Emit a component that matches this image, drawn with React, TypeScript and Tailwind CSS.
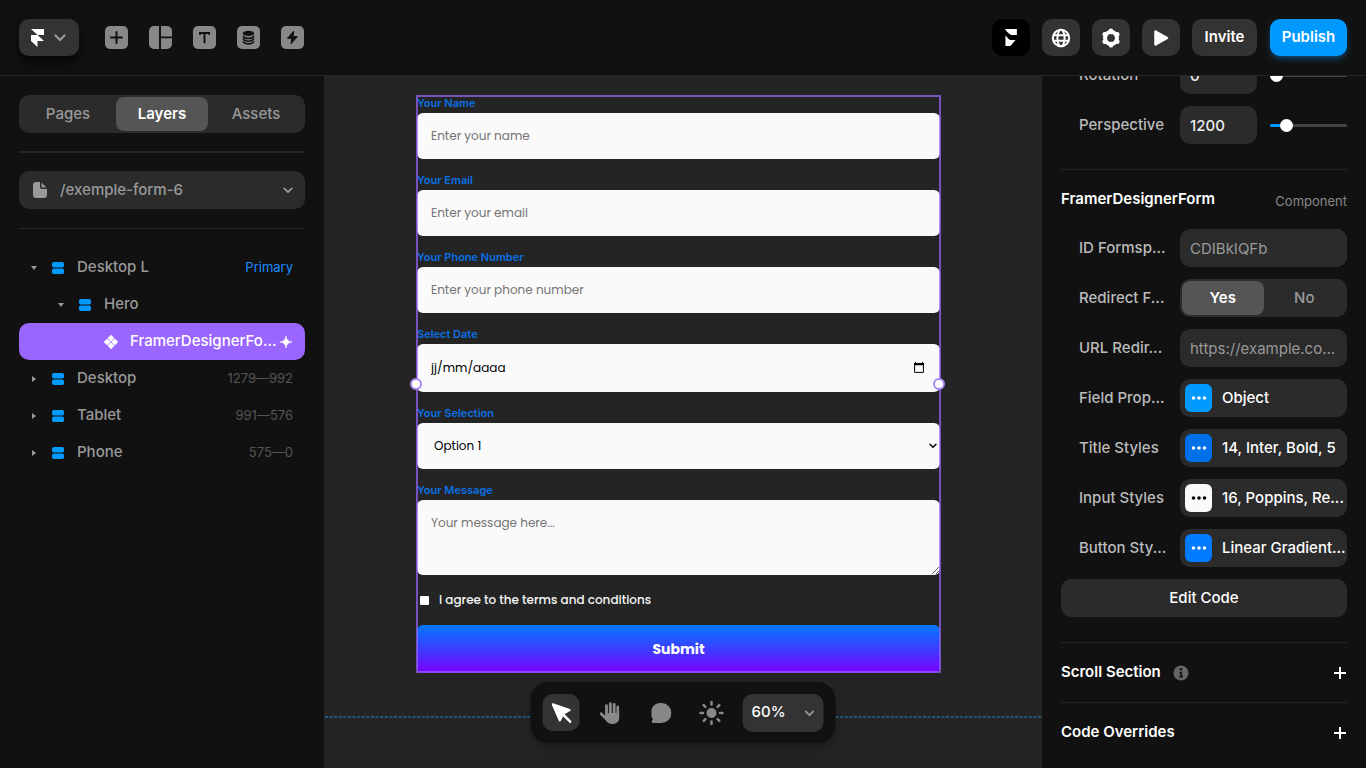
import { clsx } from "clsx";
import { useState, type ReactNode } from "react";

const Chevron = ({ className }: { className?: string }) => (
  <svg
    viewBox="0 0 12 8"
    className={className}
    fill="none"
    stroke="currentColor"
    strokeWidth="2.2"
    strokeLinecap="round"
    strokeLinejoin="round"
    aria-hidden="true"
  >
    <path d="M1.5 1.5 6 6l4.5-4.5" />
  </svg>
);

const FramerLogo = () => (
  <svg viewBox="0 0 16 24" className="h-[18px] w-[13px]" fill="#fff" preserveAspectRatio="none" aria-hidden="true">
    <path d="M0 0h16v8H8zM0 8h8l8 8H0zM0 16h8v8z" />
  </svg>
);

const SiteLogo = () => (
  <svg viewBox="0 0 36 52" className="h-[17px] w-3" fill="#fff" aria-hidden="true">
    <path d="M0 0h36v18H19C12 15 4 8 0 0zM1 19c4 6 8 10 14 15h17L16 52H1z" />
  </svg>
);

const GlobeIcon = () => (
  <svg viewBox="0 0 20 20" className="size-5" fill="none" stroke="#fff" strokeWidth="2" aria-hidden="true">
    <circle cx="10" cy="10" r="8.2" />
    <ellipse cx="10" cy="10" rx="3.6" ry="8.2" />
    <path d="M2.3 7.2h15.4M2.3 12.8h15.4" />
  </svg>
);

const GearIcon = () => (
  <svg viewBox="0 0 20 20" className="size-5" aria-hidden="true">
    <circle cx="10" cy="10" r="6" fill="none" stroke="#fff" strokeWidth="4" />
    <path
      d="M10 2.6v2M10 15.4v2M3.6 6.3l1.7 1M14.7 12.7l1.7 1M3.6 13.7l1.7-1M14.7 7.3l1.7-1"
      stroke="#fff"
      strokeWidth="4.4"
      strokeLinecap="round"
    />
    <circle cx="10" cy="10" r="3.8" fill="#333" />
  </svg>
);

const PlayIcon = () => (
  <svg viewBox="0 0 16 18" className="h-[18px] w-4" aria-hidden="true">
    <path d="M2.5 2.5v13L14 9z" fill="#fff" stroke="#fff" strokeWidth="2.5" strokeLinejoin="round" />
  </svg>
);

const Tile = ({ children }: { children: ReactNode }) => (
  <svg viewBox="0 0 23 23" className="size-[23px]" aria-hidden="true">
    <rect width="23" height="23" rx="5" fill="#888" />
    {children}
  </svg>
);

const TOOLS = [
  {
    name: "Insert",
    icon: (
      <Tile>
        <path d="M11.5 6v11M6 11.5h11" stroke="#111" strokeWidth="2" strokeLinecap="round" />
      </Tile>
    ),
  },
  {
    name: "Layout",
    icon: (
      <svg viewBox="0 0 23 23" className="size-[23px]" fill="#888" aria-hidden="true">
        <path d="M5 0h5v23H5a5 5 0 0 1-5-5V5a5 5 0 0 1 5-5zM12 0h6a5 5 0 0 1 5 5v5.6H12zM12 12.2h11V18a5 5 0 0 1-5 5h-6z" />
      </svg>
    ),
  },
  {
    name: "Text",
    icon: (
      <Tile>
        <path d="M7 8V7h9v1M11.5 7v9.5" fill="none" stroke="#111" strokeWidth="2" strokeLinecap="round" />
      </Tile>
    ),
  },
  {
    name: "CMS",
    icon: (
      <Tile>
        <ellipse cx="11.5" cy="7.4" rx="5.7" ry="2.6" fill="#111" />
        <path
          d="M6.4 10.5c1.5 2.6 8.7 2.6 10.2 0M6.4 13.2c1.5 2.7 8.7 2.7 10.2 0M6.4 15.9c1.5 2.7 8.7 2.7 10.2 0"
          fill="none"
          stroke="#111"
          strokeWidth="1.7"
          strokeLinecap="round"
        />
      </Tile>
    ),
  },
  {
    name: "Actions",
    icon: (
      <Tile>
        <path
          d="M12.7 5.2 6.5 12.3h4.3l-.8 5.5 6.4-7.2h-4.3z"
          fill="#111"
          stroke="#111"
          strokeWidth="1"
          strokeLinejoin="round"
        />
      </Tile>
    ),
  },
];

const StackIcon = () => (
  <svg viewBox="0 0 12 12" className="size-3 shrink-0" fill="#0099ff" aria-hidden="true">
    <rect width="12" height="5.6" rx="1.8" />
    <rect y="6.4" width="12" height="5.6" rx="1.8" />
  </svg>
);

const ComponentIcon = () => (
  <svg viewBox="0 0 14 14" className="size-3.5 shrink-0" fill="#fff" aria-hidden="true">
    <path
      d="M7 .6 9.600 3.200 7 5.800 4.400 3.200zM3.200 4.400 5.800 7 3.200 9.600.6 7zM10.800 4.400 13.400 7l-2.600 2.600L8.200 7zM7 8.200l2.600 2.600L7 13.400l-2.600-2.600z"
      stroke="#fff"
      strokeWidth="1.1"
      strokeLinejoin="round"
    />
  </svg>
);

const SparkleIcon = () => (
  <svg viewBox="0 0 12 12" className="size-3 shrink-0" fill="#fff" aria-hidden="true">
    <path
      d="M6 0c.5 3.8 2.2 5.5 6 6-3.8.5-5.5 2.2-6 6-.5-3.8-2.2-5.5-6-6 3.8-.5 5.5-2.2 6-6z"
      stroke="#fff"
      strokeWidth=".6"
    />
  </svg>
);

const Caret = ({ open }: { open?: boolean }) => (
  <svg viewBox="0 0 6 6" className="size-1.5 shrink-0" fill="#999" aria-hidden="true">
    {open ? <path d="M0 1h6L3 5z" /> : <path d="M1 0v6l4-3z" />}
  </svg>
);

const ICON_BUTTON = "flex h-[37px] w-[38px] items-center justify-center rounded-[10px]";

const TopBar = () => (
  <header className="flex h-[76px] shrink-0 items-center justify-between border-b border-[#242424] bg-[#111] px-[19px]">
    <div className="flex items-center">
      <button
        aria-label="Main menu"
        className="flex h-[37px] w-[60px] items-center justify-center gap-2.5 rounded-[10px] bg-[#333] pr-0.5 shadow-lg shadow-black/60"
      >
        <FramerLogo />
        <Chevron className="h-2 w-3 text-[#999]" />
      </button>
      <div className="ml-[26px] flex gap-[21px]">
        {TOOLS.map(({ name, icon }) => (
          <button key={name} aria-label={name}>
            {icon}
          </button>
        ))}
      </div>
    </div>

    <div className="flex gap-3 text-[15px] font-semibold text-white">
      <button aria-label="Site" className={clsx(ICON_BUTTON, "bg-black")}>
        <SiteLogo />
      </button>
      <button aria-label="Language" className={clsx(ICON_BUTTON, "bg-[#333]")}>
        <GlobeIcon />
      </button>
      <button aria-label="Settings" className={clsx(ICON_BUTTON, "bg-[#333]")}>
        <GearIcon />
      </button>
      <button aria-label="Preview" className={clsx(ICON_BUTTON, "bg-[#333]")}>
        <PlayIcon />
      </button>
      <button className="h-[37px] w-[65px] rounded-[10px] bg-[#333]">Invite</button>
      <button className="ml-px h-[37px] w-[77px] rounded-[10px] bg-[#0099ff] shadow-md shadow-[#0099ff]/30">Publish</button>
    </div>
  </header>
);

const TABS = ["Pages", "Layers", "Assets"];

type Layer = {
  name: string;
  info?: string;
  primary?: boolean;
  open?: boolean;
  nested?: boolean;
  selected?: boolean;
};

const LAYERS: Layer[] = [
  { name: "Desktop L", info: "Primary", primary: true, open: true },
  { name: "Hero", open: true, nested: true },
  { name: "FramerDesignerFo...", selected: true },
  { name: "Desktop", info: "1279—992" },
  { name: "Tablet", info: "991—576" },
  { name: "Phone", info: "575—0" },
];

const LayerRow = ({ layer }: { layer: Layer }) => {
  if (layer.selected)
    return (
      <li>
        <button className="flex h-[37px] w-full items-center rounded-[10px] bg-[#9966ff] pr-[13px] pl-[85px] text-[15px] font-medium text-white">
          <ComponentIcon />
          <span className="mr-auto ml-3">{layer.name}</span>
          <SparkleIcon />
        </button>
      </li>
    );

  return (
    <li>
      <button
        className={clsx(
          "flex h-[37px] w-full items-center pr-3 text-[15px] font-medium text-[#999]",
          layer.nested ? "pl-[39px]" : "pl-3",
        )}
      >
        <Caret open={layer.open} />
        <span className="ml-[15px]">
          <StackIcon />
        </span>
        <span className="ml-[13px]">{layer.name}</span>
        {layer.info && (
          <span className={clsx("ml-auto text-[13px] font-normal", layer.primary ? "text-[#1a8cff]" : "text-[#555]")}>
            {layer.info}
          </span>
        )}
      </button>
    </li>
  );
};

const LeftPanel = () => {
  const [tab, setTab] = useState("Layers");

  return (
    <aside className="w-[324px] shrink-0 bg-[#111] p-[19px]">
      <div role="tablist" className="grid h-[38px] grid-cols-3 rounded-[10px] bg-[#2b2b2b] p-0.5 text-[15px]">
        {TABS.map((name) => (
          <button
            key={name}
            role="tab"
            aria-selected={tab === name}
            onClick={() => setTab(name)}
            className={clsx(
              "rounded-lg",
              tab === name ? "mx-px bg-[#555] font-semibold text-white" : "font-medium text-[#999]",
            )}
          >
            {name}
          </button>
        ))}
      </div>

      <hr className="mt-[18px] border-t-2 border-[#242424]" />

      <div className="relative mt-[18px]">
        <svg viewBox="0 0 14 16" className="absolute top-[11px] left-[14px] h-4 w-3.5" fill="#999" aria-hidden="true">
          <path d="M3 0h4v5a2 2 0 0 0 2 2h5v6a3 3 0 0 1-3 3H3a3 3 0 0 1-3-3V3a3 3 0 0 1 3-3z" />
          <path d="M8.5.5 13.3 5.5H9.5a1 1 0 0 1-1-1z" />
        </svg>
        <select
          aria-label="Page"
          className="h-[38px] w-full appearance-none rounded-[10px] bg-[#2b2b2b] pl-[41px] text-[15px] font-medium text-[#999]"
        >
          <option>/exemple-form-6</option>
        </select>
        <Chevron className="pointer-events-none absolute top-4 right-3 h-[7px] w-2.5 text-[#999]" />
      </div>

      <hr className="mt-[19px] border-[#242424]" />

      <ul className="mt-5">
        {LAYERS.map((layer) => (
          <LayerRow key={layer.name} layer={layer} />
        ))}
      </ul>
    </aside>
  );
};

const FORM_FONT = "font-['Poppins','Noto_Sans',sans-serif]";
const FIELD = clsx(FORM_FONT, "block w-full rounded-md bg-[#fafafa] text-xs text-black placeholder:text-[#757575]");

const FormField = ({ id, label, children }: { id: string; label: string; children: ReactNode }) => (
  <div>
    <label htmlFor={id} className="mb-[3px] block text-[11px] leading-[14px] font-semibold text-[#0a70e4]">
      {label}
    </label>
    {children}
  </div>
);

const DesignerForm = () => (
  <form className="relative px-px pt-px" onSubmit={(e) => e.preventDefault()}>
    <div className="flex flex-col gap-3.5">
      <FormField id="name" label="Your Name">
        <input id="name" placeholder="Enter your name" className={clsx(FIELD, "h-[46px] px-3.5")} />
      </FormField>
      <FormField id="email" label="Your Email">
        <input id="email" type="email" placeholder="Enter your email" className={clsx(FIELD, "h-[46px] px-3.5")} />
      </FormField>
      <FormField id="phone" label="Your Phone Number">
        <input id="phone" type="tel" placeholder="Enter your phone number" className={clsx(FIELD, "h-[46px] px-3.5")} />
      </FormField>
      <FormField id="date" label="Select Date">
        <div className="relative">
          <input id="date" placeholder="jj/mm/aaaa" className={clsx(FIELD, "h-12 px-3.5 placeholder:text-black")} />
          <svg viewBox="0 0 10 11" className="absolute top-[18px] right-4 h-[11px] w-2.5" aria-hidden="true">
            <path d="M.6 2.5h8.8v7.9H.6z" fill="none" stroke="#000" strokeWidth="1" />
            <path d="M0 1h1V0h1v1h6V0h1v1h1v2.2H0z" />
          </svg>
        </div>
      </FormField>
      <FormField id="selection" label="Your Selection">
        <div className="relative">
          <select id="selection" className={clsx(FIELD, "h-[46px] appearance-none px-[17px]")}>
            <option>Option 1</option>
          </select>
          <Chevron className="pointer-events-none absolute top-5 right-[3px] h-1.5 w-2 text-black" />
        </div>
      </FormField>
      <FormField id="message" label="Your Message">
        <textarea id="message" placeholder="Your message here..." className={clsx(FIELD, "h-[75px] px-3.5 pt-[15px]")} />
      </FormField>
    </div>

    <label className={clsx("flex h-[50px] items-center gap-2.5 pl-[3px] text-xs font-medium text-[#f5f5f5]", FORM_FONT)}>
      <input type="checkbox" className="size-[9px] appearance-none rounded-[1px] bg-white checked:bg-[#0099ff]" />
      I agree to the terms and conditions
    </label>

    <button
      className={clsx(
        "block h-12 w-full rounded-md bg-linear-to-b/srgb from-[#007aff] to-[#7a00ff] text-sm font-bold text-white",
        FORM_FONT,
      )}
    >
      Submit
    </button>

    {/* selection outline and its two side handles */}
    <div className="pointer-events-none absolute inset-0 border-2 border-[#9966ff]/70">
      <span className="absolute top-1/2 -left-2 size-3 -translate-y-1/2 rounded-full border-2 border-[#a988f5] bg-white" />
      <span className="absolute top-1/2 -right-1.5 size-3 -translate-y-1/2 rounded-full border-2 border-[#a988f5] bg-white" />
    </div>
  </form>
);

const CanvasToolbar = () => (
  <div className="absolute bottom-[25px] left-1/2 flex h-[61px] -translate-x-1/2 items-center gap-[13px] rounded-[18px] bg-[#111] px-3 shadow-lg shadow-black/20">
    <button aria-label="Select" className="flex size-[37px] items-center justify-center rounded-[10px] bg-[#333]">
      <svg viewBox="0 0 60 60" className="size-5" fill="#fff" stroke="#fff" strokeLinejoin="round" aria-hidden="true">
        <path d="M4 4 54 21 35 32 25 52z" strokeWidth="7" />
        <path d="M35 35 56 56" strokeWidth="8" strokeLinecap="round" />
      </svg>
    </button>
    <button aria-label="Hand" className="flex size-[37px] items-center justify-center pr-1">
      <svg viewBox="0 0 60 66" className="h-[22px] w-5" aria-hidden="true">
        <path
          d="M21 11v30M32.5 5v36M44 7v34M55 15v30M5 35l18 18"
          stroke="#888"
          strokeWidth="8.5"
          strokeLinecap="round"
        />
        <path d="M17 33h42.2v14C59.2 58 51 66 39 66c-9 0-14-3-19-9z" fill="#888" />
      </svg>
    </button>
    <button aria-label="Comment" className="flex size-[37px] items-center justify-center">
      <svg viewBox="0 0 20 20" className="size-5" fill="#888" aria-hidden="true">
        <path d="M10 0a10 10 0 1 1 0 20H1.3a1.2 1.2 0 0 1-.8-2l1-1.7A10 10 0 0 1 10 0z" />
      </svg>
    </button>
    <button aria-label="Theme" className="flex size-[37px] items-center justify-center">
      <svg viewBox="0 0 26 26" className="size-[26px]" aria-hidden="true">
        <circle cx="13" cy="13" r="5" fill="#888" />
        <path
          d="M13 2v2.4M13 21.6V24M2 13h2.4M21.6 13H24M5.2 5.2l1.7 1.7M19.1 19.1l1.7 1.7M5.2 20.8l1.7-1.7M19.1 6.9l1.7-1.7"
          stroke="#888"
          strokeWidth="2.6"
          strokeLinecap="round"
        />
      </svg>
    </button>
    <div className="relative">
      <select
        aria-label="Zoom"
        className="block h-[38px] w-[81px] appearance-none rounded-[10px] bg-[#333] pl-[9px] text-[15px] font-medium text-white"
      >
        <option>60%</option>
      </select>
      <Chevron className="pointer-events-none absolute top-4 right-[9px] h-[7px] w-2.5 text-[#999]" />
    </div>
  </div>
);

const Canvas = () => (
  <main className="relative min-w-0 flex-1 overflow-hidden bg-[#242424] pt-[19px] pr-[101px] pl-[92px]">
    <DesignerForm />
    {/* breakpoint fold line */}
    <svg className="absolute inset-x-0 bottom-[50px] h-0.5 w-full" aria-hidden="true">
      <line x1="1" y1="1" x2="100%" y2="1" stroke="#1a6a9c" strokeWidth="1.6" strokeDasharray="3 1.6" />
    </svg>
    <CanvasToolbar />
  </main>
);

const Row = ({ label, id, children }: { label: string; id: string; children: ReactNode }) => (
  <div className="flex h-[38px] items-center">
    <label htmlFor={id} className="w-[119px] shrink-0 pl-[18px] text-[15px] font-medium text-[#bbb]">
      {label}
    </label>
    {children}
  </div>
);

const SliderRow = ({ label, id, initial, max }: { label: string; id: string; initial: number; max: number }) => {
  const [value, setValue] = useState(initial);
  const percent = (value / max) * 100;

  return (
    <Row label={label} id={id}>
      <input
        id={id}
        value={value}
        onChange={(e) => setValue(Number(e.target.value) || 0)}
        className="h-[38px] w-[77px] rounded-[10px] bg-[#2b2b2b] px-2.5 text-[15px] font-medium text-[#eee]"
      />
      <input
        type="range"
        aria-label={label}
        max={max}
        value={value}
        onChange={(e) => setValue(Number(e.target.value))}
        className="ml-[13px] h-[3px] w-full min-w-0 flex-1 appearance-none rounded-full [&::-webkit-slider-thumb]:size-[13px] [&::-webkit-slider-thumb]:appearance-none [&::-webkit-slider-thumb]:rounded-full [&::-webkit-slider-thumb]:bg-white"
        style={{ background: `linear-gradient(to right, #0099ff ${percent}%, #444 ${percent}%)` }}
      />
    </Row>
  );
};

const STYLE_ROWS = [
  { id: "field-props", label: "Field Prop...", value: "Object", swatch: "bg-[#0099ff] text-white" },
  { id: "title-styles", label: "Title Styles", value: "14, Inter, Bold, 5", swatch: "bg-[#0070e8] text-white" },
  { id: "input-styles", label: "Input Styles", value: "16, Poppins, Re...", swatch: "bg-[#fafafa] text-black" },
  { id: "button-styles", label: "Button Sty...", value: "Linear Gradient...", swatch: "bg-[#007aff] text-white" },
];

const PlusIcon = () => (
  <svg viewBox="0 0 12 12" className="size-3" stroke="#fff" strokeWidth="2" aria-hidden="true">
    <path d="M6 0v12M0 6h12" />
  </svg>
);

const RightPanel = () => {
  const [redirect, setRedirect] = useState(true);

  return (
    <aside className="w-[324px] shrink-0 overflow-hidden bg-[#111] px-[19px]">
      {/* the panel is scrolled down, so its first row is half hidden */}
      <div className="-mt-5 flex flex-col gap-3">
        <SliderRow label="Rotation" id="rotation" initial={0} max={360} />
        <SliderRow label="Perspective" id="perspective" initial={1200} max={8000} />
      </div>

      <section className="mt-[25px] border-t border-[#242424]">
        <div className="flex h-[59px] items-center justify-between">
          <h2 className="text-[15px] font-semibold text-white">FramerDesignerForm</h2>
          <span className="mt-1 text-[13px] text-[#888]">Component</span>
        </div>
        <div className="flex flex-col gap-3">
          <Row label="ID Formsp..." id="formspark">
            <input
              id="formspark"
              placeholder="CDIBkIQFb"
              className="h-[38px] min-w-0 flex-1 rounded-[10px] bg-[#2b2b2b] px-2.5 text-[15px] placeholder:text-[#999]"
            />
          </Row>
          <Row label="Redirect F..." id="redirect">
            <div className="grid h-[38px] flex-1 grid-cols-2 rounded-[10px] bg-[#2b2b2b] p-0.5 text-[15px]">
              <button
                id="redirect"
                onClick={() => setRedirect(true)}
                className={clsx("rounded-lg", redirect ? "bg-[#555] font-semibold text-white" : "font-medium text-[#999]")}
              >
                Yes
              </button>
              <button
                onClick={() => setRedirect(false)}
                className={clsx("rounded-lg", !redirect ? "bg-[#555] font-semibold text-white" : "font-medium text-[#999]")}
              >
                No
              </button>
            </div>
          </Row>
          <Row label="URL Redir..." id="url">
            <input
              id="url"
              placeholder="https://example.co..."
              className="h-[38px] min-w-0 flex-1 rounded-[10px] bg-[#2b2b2b] pl-2.5 text-[15px] placeholder:text-[#999]"
            />
          </Row>
          {STYLE_ROWS.map(({ id, label, value, swatch }) => (
            <Row key={id} label={label} id={id}>
              <button
                id={id}
                className="flex h-[38px] min-w-0 flex-1 items-center gap-2.5 rounded-[10px] bg-[#2b2b2b] pl-[5px] text-[15px] font-medium whitespace-nowrap text-white"
              >
                <span className={clsx("flex h-7 w-[27px] shrink-0 items-center justify-center rounded-md", swatch)}>
                  <svg viewBox="0 0 16 4" className="h-1 w-4" fill="currentColor" aria-hidden="true">
                    <circle cx="2.5" cy="2" r="1.8" />
                    <circle cx="8" cy="2" r="1.8" />
                    <circle cx="13.5" cy="2" r="1.8" />
                  </svg>
                </span>
                {value}
              </button>
            </Row>
          ))}
          <button className="h-[38px] rounded-[10px] bg-[#2b2b2b] text-[15px] font-medium text-white">Edit Code</button>
        </div>
      </section>

      <section className="mt-[25px] flex h-[60px] items-center border-t border-[#242424]">
        <h2 className="text-[15px] font-semibold text-white">Scroll Section</h2>
        <svg viewBox="0 0 16 16" className="ml-3 size-4" aria-hidden="true">
          <circle cx="8" cy="8" r="7.5" fill="#666" />
          <circle cx="8" cy="4.3" r="1.3" fill="#111" />
          <path d="M6.5 7.5h1.7v4M6.3 11.7h3.6" fill="none" stroke="#111" strokeWidth="1.7" />
        </svg>
        <button aria-label="Add scroll section" className="mr-px ml-auto">
          <PlusIcon />
        </button>
      </section>

      <section className="flex h-[60px] items-center justify-between border-t border-[#242424]">
        <h2 className="text-[15px] font-semibold text-white">Code Overrides</h2>
        <button aria-label="Add code override" className="mr-px">
          <PlusIcon />
        </button>
      </section>
    </aside>
  );
};

const App = () => (
  <div className="flex h-screen flex-col overflow-hidden bg-[#111] font-['Inter',sans-serif]">
    <TopBar />
    <div className="flex min-h-0 flex-1">
      <LeftPanel />
      <Canvas />
      <RightPanel />
    </div>
  </div>
);

export default App;
